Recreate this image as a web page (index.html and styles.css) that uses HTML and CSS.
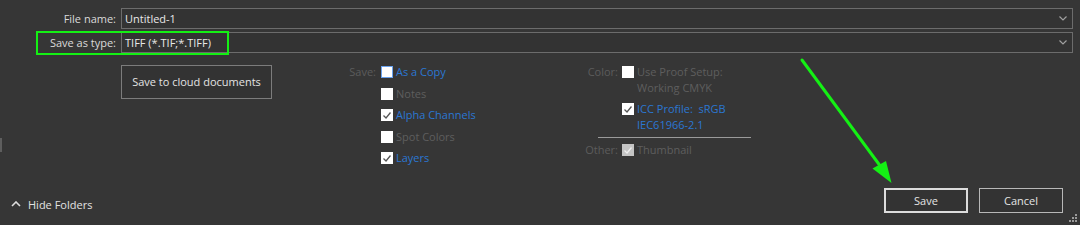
FILE: index.html
```html
<!DOCTYPE html>
<html>
<head>
<meta charset="utf-8">
<link rel="stylesheet" href="styles.css">
</head>
<body>
<div class="dialog">
  <div class="field-row">
    <div class="field-label">File name:</div>
    <div class="field-input">
      <span>Untitled-1</span>
      <svg class="chev" width="8" height="5" viewBox="0 0 8 5"><polyline points="0.5,0.5 4,4 7.5,0.5" fill="none" stroke="#a0a0a0" stroke-width="1.2"/></svg>
    </div>
  </div>
  <div class="field-row">
    <div class="field-label">Save as type:</div>
    <div class="field-input">
      <span>TIFF (*.TIF;*.TIFF)</span>
      <svg class="chev" width="8" height="5" viewBox="0 0 8 5"><polyline points="0.5,0.5 4,4 7.5,0.5" fill="none" stroke="#a0a0a0" stroke-width="1.2"/></svg>
    </div>
  </div>

  <div class="options">
    <div class="cloud-col">
      <div class="btn cloud">Save to cloud documents</div>
    </div>

    <div class="group save-group">
      <div class="group-label">Save:</div>
      <div class="items">
        <div class="item"><span class="cb focus"></span><span class="txt blue">As a Copy</span></div>
        <div class="item"><span class="cb"></span><span class="txt dim">Notes</span></div>
        <div class="item"><span class="cb"><svg viewBox="0 0 12 12"><polyline points="2.5,6.5 5,9 9.5,3.5" fill="none" stroke="#555" stroke-width="1.3"/></svg></span><span class="txt blue">Alpha Channels</span></div>
        <div class="item"><span class="cb"></span><span class="txt dim">Spot Colors</span></div>
        <div class="item"><span class="cb"><svg viewBox="0 0 12 12"><polyline points="2.5,6.5 5,9 9.5,3.5" fill="none" stroke="#555" stroke-width="1.3"/></svg></span><span class="txt blue">Layers</span></div>
      </div>
    </div>

    <div class="group color-group">
      <div class="crow">
        <div class="group-label">Color:</div>
        <div class="item multi"><span class="cb"></span><span class="txt dim">Use Proof Setup:<br>Working CMYK</span></div>
      </div>
      <div class="crow icc">
        <div class="group-label"></div>
        <div class="item multi"><span class="cb"><svg viewBox="0 0 12 12"><polyline points="2.5,6.5 5,9 9.5,3.5" fill="none" stroke="#555" stroke-width="1.3"/></svg></span><span class="txt blue">ICC Profile:&nbsp; sRGB<br>IEC61966-2.1</span></div>
      </div>
      <div class="divider"></div>
      <div class="crow other">
        <div class="group-label">Other:</div>
        <div class="item"><span class="cb disabled"><svg viewBox="0 0 12 12"><polyline points="2.5,6.5 5,9 9.5,3.5" fill="none" stroke="#eeeeee" stroke-width="1.3"/></svg></span><span class="txt dim">Thumbnail</span></div>
      </div>
    </div>
  </div>

  <div class="footer">
    <div class="hide-folders">
      <svg width="10" height="6" viewBox="0 0 10 6"><polyline points="1,5 5,1 9,5" fill="none" stroke="#dddddd" stroke-width="1.6"/></svg>
      <span>Hide Folders</span>
    </div>
    <div class="buttons">
      <div class="btn action primary">Save</div>
      <div class="btn action">Cancel</div>
    </div>
  </div>
</div>

<div class="splitter"></div>
<svg class="grip" width="10" height="10" viewBox="0 0 10 10">
  <rect x="7" y="1" width="2" height="2" fill="#9a9a9a"/>
  <rect x="4" y="4" width="2" height="2" fill="#9a9a9a"/>
  <rect x="7" y="4" width="2" height="2" fill="#9a9a9a"/>
  <rect x="1" y="7" width="2" height="2" fill="#9a9a9a"/>
  <rect x="4" y="7" width="2" height="2" fill="#9a9a9a"/>
  <rect x="7" y="7" width="2" height="2" fill="#9a9a9a"/>
</svg>

<div class="highlight-box"></div>
<svg class="arrow" width="1080" height="225" viewBox="0 0 1080 225">
  <line x1="802" y1="60" x2="881" y2="167" stroke="#14f014" stroke-width="3" stroke-linecap="round"/>
  <polygon points="891.5,183 872.5,168.5 886,161" fill="#14f014"/>
</svg>
</body>
</html>
```

FILE: styles.css
```css
html, body {
  margin: 0;
  padding: 0;
}
body {
  width: 1080px;
  height: 225px;
  overflow: hidden;
  background: #363636;
  font-family: "Open Sans", "Noto Sans", sans-serif;
  font-size: 11px;
  color: #dcdcdc;
  position: relative;
}
.dialog {
  height: 225px;
  display: flex;
  flex-direction: column;
  padding-top: 8px;
  box-sizing: border-box;
}
.field-row {
  display: flex;
  align-items: center;
  height: 21px;
  margin-bottom: 3px;
}
.field-label {
  width: 116px;
  padding-right: 5px;
  text-align: right;
  color: #dadada;
  flex: none;
}
.field-input {
  flex: 1;
  margin-right: 7px;
  height: 21px;
  box-sizing: border-box;
  border: 1px solid #6c6c6c;
  background: #333333;
  display: flex;
  align-items: center;
  justify-content: space-between;
  padding: 0 5px 0 3px;
  color: #e8e8e8;
}
.chev {
  display: block;
}
.options {
  display: flex;
  margin-top: 8px;
  line-height: 16px;
}
.cloud-col {
  padding-left: 121px;
  padding-top: 1px;
}
.btn {
  box-sizing: border-box;
  display: flex;
  align-items: center;
  justify-content: center;
  color: #e4e4e4;
  background: #333333;
}
.cloud {
  width: 151px;
  height: 34px;
  border: 1px solid #7c7c7c;
}
.group-label {
  width: 34px;
  text-align: right;
  color: #5c5c5c;
  padding-right: 4px;
  flex: none;
}
.save-group {
  display: flex;
  margin-left: 68px;
  width: 244px;
}
.save-group .group-label {
  width: 36px;
  padding-right: 5px;
}
.items {
  display: flex;
  flex-direction: column;
  gap: 5.5px;
}
.item {
  display: flex;
  align-items: flex-start;
  height: 16px;
}
.item.multi {
  height: auto;
}
.cb {
  width: 12px;
  height: 12px;
  box-sizing: border-box;
  background: #ffffff;
  margin-top: 2px;
  margin-right: 3px;
  flex: none;
  display: block;
}
.cb svg {
  display: block;
  width: 12px;
  height: 12px;
}
.cb.focus {
  border: 1px solid #6aa2ee;
}
.cb.disabled {
  background: #c4c4c4;
}
.txt.blue {
  color: #2b76d3;
}
.txt.dim {
  color: #5e5e5e;
}
.color-group {
  display: flex;
  flex-direction: column;
}
.crow {
  display: flex;
}
.crow.icc {
  margin-top: 5px;
}
.divider {
  margin-top: 4px;
  margin-left: 14px;
  width: 153px;
  height: 1px;
  background: #9a9a9a;
}
.crow.other {
  margin-top: 4px;
}
.footer {
  margin-top: auto;
  display: flex;
  justify-content: space-between;
  align-items: center;
  height: 25px;
  margin-bottom: 12px;
}
.hide-folders {
  display: flex;
  align-items: center;
  gap: 7px;
  padding-left: 11px;
  padding-top: 7px;
  color: #e2e2e2;
}
.hide-folders svg {
  display: block;
}
.buttons {
  display: flex;
  gap: 11px;
  margin-right: 17px;
}
.action {
  width: 84px;
  height: 25px;
  border: 1px solid #b8b8b8;
}
.action.primary {
  border: 2px solid #dcdcdc;
}
.splitter {
  position: absolute;
  left: 0;
  top: 138px;
  width: 2px;
  height: 14px;
  background: #5e5e5e;
}
.grip {
  position: absolute;
  right: 2px;
  bottom: 2px;
}
.highlight-box {
  position: absolute;
  left: 36px;
  top: 31px;
  width: 193px;
  height: 24px;
  box-sizing: border-box;
  border: 2px solid #14f014;
}
.arrow {
  position: absolute;
  left: 0;
  top: 0;
  pointer-events: none;
}
```
